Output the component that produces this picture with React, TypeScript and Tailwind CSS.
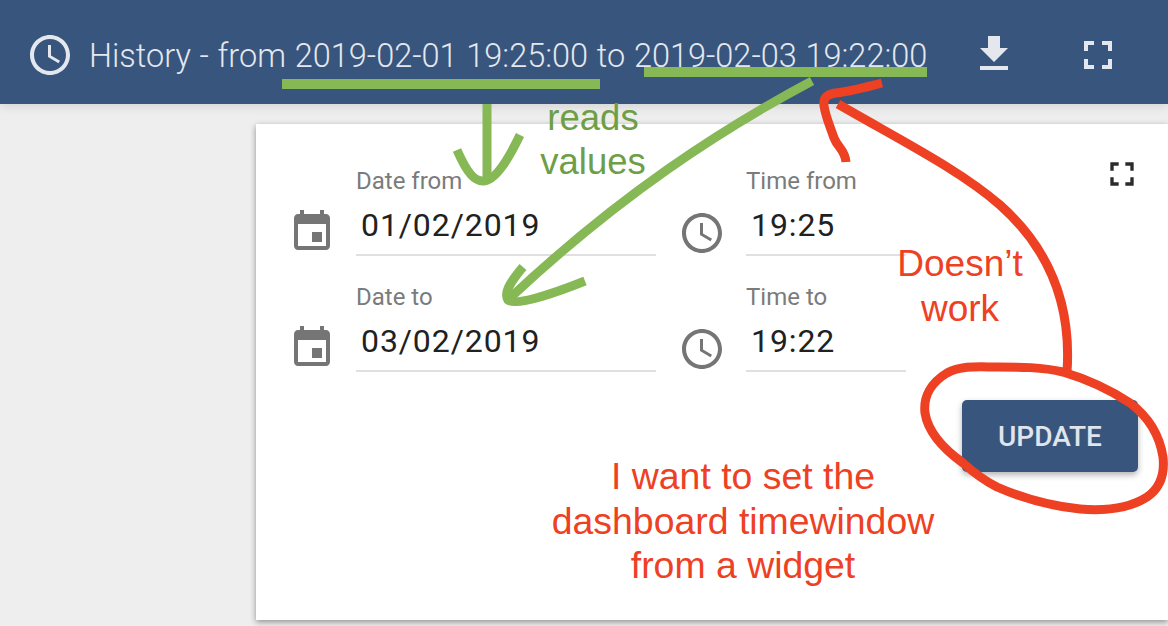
const CLOCK = 'M11.99 2C6.47 2 2 6.48 2 12s4.47 10 9.99 10C17.52 22 22 17.52 22 12S17.52 2 11.99 2zM12 20c-4.42 0-8-3.58-8-8s3.58-8 8-8 8 3.58 8 8-3.58 8-8 8zM12.5 7H11v6l5.25 3.15.75-1.23-4.5-2.67z'
const EVENT = 'M17 12h-5v5h5v-5zM16 1v2H8V1H6v2H5c-1.11 0-1.99.9-1.99 2L3 19c0 1.1.89 2 2 2h14c1.1 0 2-.9 2-2V5c0-1.1-.9-2-2-2h-1V1h-2zm3 18H5V8h14v11z'
const DOWNLOAD = 'M19 9h-4V3H9v6H5l7 7 7-7zM5 18v2h14v-2H5z'
const FULLSCREEN = 'M7 14H5v5h5v-2H7v-3zm-2-4h2V7h3V5H5v5zm12 7h-3v2h5v-5h-2v3zM14 5v2h3v3h2V5h-5z'

function Icon({ d, className }: { d: string; className: string }) {
  return (
    <svg viewBox="0 0 24 24" fill="currentColor" className={className}>
      <path d={d} />
    </svg>
  )
}

function Field({ label, value, width }: { label: string; value: string; width: string }) {
  return (
    <div className={width}>
      <div className="h-[30px] text-[24px] leading-[30px] text-[#7b7b7b]">{label}</div>
      <div className="h-[60px] border-b-2 border-[#e0e0e0] pl-[5px] pt-[9px] text-[32px] leading-[40px] tracking-[0.9px] text-[#212121]">
        {value}
      </div>
    </div>
  )
}

function Row({ dateLabel, date, timeLabel, time }: { dateLabel: string; date: string; timeLabel: string; time: string }) {
  return (
    <div className="flex h-[116px] items-start">
      <Icon d={EVENT} className="mt-[42px] h-12 w-12 text-[#757575]" />
      <div className="ml-5">
        <Field label={dateLabel} value={date} width="w-[300px]" />
      </div>
      <Icon d={CLOCK} className="ml-[22px] mt-[43px] h-12 w-12 text-[#757575]" />
      <div className="ml-5">
        <Field label={timeLabel} value={time} width="w-[160px]" />
      </div>
    </div>
  )
}

function Annotations() {
  const green = '#86b855'
  const red = '#ee4023'
  return (
    <svg viewBox="0 0 1168 626" fill="none" strokeWidth={9} className="absolute left-0 top-0 h-[626px] w-[1168px]">
      <g stroke={green}>
        <path d="M282 84H600" strokeWidth={10} />
        <path d="M644 72H927" strokeWidth={10} />
        <path d="M487 104V180" />
        <path d="M457 150C468 175 475 181 483 181C495 181 508 160 520 135" />
        <path d="M812 81C720 130 620 195 510 298" />
        <path d="M523 267C512 280 503 292 508 300C515 306 550 295 585 281" />
      </g>
      <g stroke={red}>
        <path d="M882 83C862 88 848 92 835 93C826 95 823 98 824 106C826 118 830 126 834 138C838 148 845 150 846 162" />
        <path d="M838 104C900 140 960 170 1000 205C1045 245 1072 300 1067 372" />
        <path d="M997 367C1020 367 1042 367 1063 372C1090 380 1112 391 1130 403C1150 418 1160 438 1163 457C1165 475 1160 488 1147 497C1130 508 1105 511 1080 509C1050 506 1022 498 997 487C985 481 973 472 963 463C945 450 928 432 925 413C923 396 932 382 947 373C962 365 980 367 997 367Z" />
      </g>
    </svg>
  )
}

export default function App() {
  return (
    <div className="relative h-[626px] w-[1168px] overflow-hidden bg-[#eeeeee] font-['Roboto',sans-serif]">
      <header className="flex h-[104px] items-center bg-[#38557d] pt-[6px] text-[#e4e8ee] shadow-[0_2px_10px_rgba(0,0,0,0.12)]">
        <Icon d={CLOCK} className="ml-[26px] h-12 w-12" />
        <div className="ml-[15px] mt-[1px] w-[881px] whitespace-nowrap text-[32.5px] font-light leading-[40px] [word-spacing:0.8px]">
          History - from 2019-02-01 19:25:00 to 2019-02-03 19:22:00
        </div>
        <Icon d={DOWNLOAD} className="-mt-[3px] h-12 w-12" />
        <Icon d={FULLSCREEN} className="ml-[56px] h-12 w-12" />
      </header>
      <main className="ml-[256px] mt-5 h-[496px] bg-white pl-8 pt-[42px] shadow-[0_2px_6px_rgba(0,0,0,0.4)]">
        <div className="relative">
          <Row dateLabel="Date from" date="01/02/2019" timeLabel="Time from" time="19:25" />
          <Row dateLabel="Date to" date="03/02/2019" timeLabel="Time to" time="19:22" />
          <Icon d={FULLSCREEN} className="absolute left-[814px] top-[-12px] h-[40px] w-[40px] text-[#2b2b2b]" />
        </div>
        <div className="flex w-[850px] justify-end pt-[2px]">
          <button className="h-[72px] w-[176px] rounded-[5px] bg-[#38557d] pt-[2px] text-[28px] font-medium text-[#e0e4ec] shadow-[0_3px_6px_rgba(0,0,0,0.3)]">
            UPDATE
          </button>
        </div>
      </main>
      <Annotations />
      <div className="absolute left-[500px] top-[96px] w-[186px] text-center font-['Liberation_Sans',sans-serif] text-[36.5px] leading-[44px] text-[#6e9e45]">
        reads
        <br />
        values
      </div>
      <div className="absolute left-[860px] top-[241px] w-[200px] text-center font-['Liberation_Sans',sans-serif] text-[37px] leading-[45px] text-[#ee4023]">
        Doesn’t
        <br />
        work
      </div>
      <div className="absolute left-[503px] top-[454px] w-[480px] text-center font-['Liberation_Sans',sans-serif] text-[37.4px] leading-[44.5px] text-[#ee4023]">
        I want to set the
        <br />
        dashboard timewindow
        <br />
        from a widget
      </div>
    </div>
  )
}
